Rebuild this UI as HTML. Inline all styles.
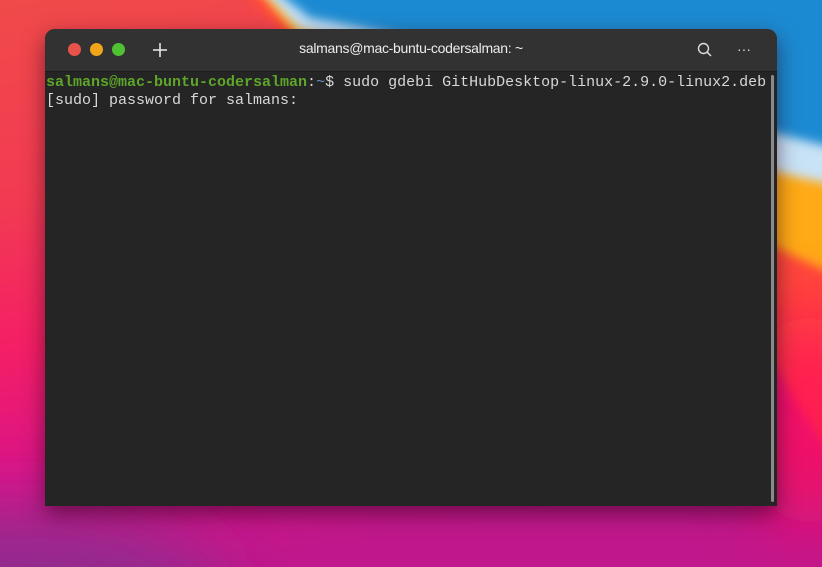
<!DOCTYPE html>
<html><head><style>
html,body{margin:0;padding:0;width:822px;height:567px;overflow:hidden;}
body{position:relative;background:#e8254a;}
.bg{position:absolute;left:0;top:0;}
.win{position:absolute;left:45px;top:29px;width:732px;height:477px;background:#252525;border-radius:10px 10px 0 0;box-shadow:0 8px 22px rgba(40,0,20,.55);overflow:hidden;}
.tb{position:absolute;left:0;top:0;width:732px;height:42px;background:#323232;border-bottom:1px solid #1c1c1c;}
.dot{position:absolute;top:14px;width:13px;height:13px;border-radius:50%;}
.title{position:absolute;left:0;width:732px;top:11px;text-align:center;color:#ececec;font:14px "Liberation Sans",sans-serif;letter-spacing:-0.3px;}
.term{position:absolute;left:1px;top:45px;font:15px/18px "Liberation Mono",monospace;color:#d8d8d8;white-space:pre;}
.g{color:#5ea62a;font-weight:bold;}
.b{color:#6c8fc4;}
.sb{position:absolute;left:726px;top:46px;width:3px;height:427px;background:#8a8a8a;border-radius:2px;}
</style></head><body>
<svg class="bg" width="822" height="567" viewBox="0 0 822 567">
<defs>
<linearGradient id="l" x1="0" y1="0" x2="0.2" y2="1">
<stop offset="0" stop-color="#f04a4a"/><stop offset="0.35" stop-color="#f23a52"/><stop offset="0.6" stop-color="#f41e66"/><stop offset="0.82" stop-color="#d8148a"/><stop offset="1" stop-color="#c0188c"/></linearGradient>
<filter id="f" x="-20%" y="-20%" width="140%" height="140%"><feGaussianBlur stdDeviation="5"/></filter>
<filter id="f2" x="-50%" y="-50%" width="200%" height="200%"><feGaussianBlur stdDeviation="35"/></filter>
</defs>
<rect width="822" height="567" fill="url(#l)"/>
<path d="M240 -20 L900 -20 L900 540 C790 420 760 320 700 260 C600 160 450 90 330 60 C290 40 260 20 240 -20Z" fill="#ff4a3a" filter="url(#f)"/>
<path d="M250 -20 L900 -20 L900 300 C780 260 700 200 600 160 C480 110 380 70 300 40Z" fill="#ffaa12" filter="url(#f)"/>
<path d="M252 -20 L900 -20 L900 195 C780 180 700 150 600 120 C480 80 380 50 300 30Z" fill="#c8e2f6" filter="url(#f)"/>
<path d="M262 -20 L900 -20 L900 160 C780 140 700 110 600 85 C480 55 380 30 310 18Z" fill="#1a8ad2" filter="url(#f)"/>
<ellipse cx="20" cy="600" rx="200" ry="90" fill="#8a2f8e" filter="url(#f2)" opacity="0.85"/>
<ellipse cx="810" cy="420" rx="60" ry="110" fill="#ff0a5a" filter="url(#f2)" opacity="0.8"/>
</svg>
<div class="win">
<div class="tb">
<div class="dot" style="left:23px;background:#e9524a"></div>
<div class="dot" style="left:45px;background:#f2a51b"></div>
<div class="dot" style="left:67px;background:#4fc133"></div>
<svg style="position:absolute;left:108px;top:14px" width="14" height="14"><path d="M7 0V14M0 7H14" stroke="#eee" stroke-width="1.5"/></svg>
<div class="title">salmans@mac-buntu-codersalman: ~</div>
<svg style="position:absolute;left:652px;top:13px" width="16" height="16"><circle cx="6.5" cy="6.5" r="5" fill="none" stroke="#ddd" stroke-width="1.4"/><path d="M10.2 10.2L14 14" stroke="#ddd" stroke-width="1.5"/></svg>
<div style="position:absolute;left:692px;top:12px;color:#ddd;font:14px 'Liberation Sans',sans-serif">···</div>
</div>
<div class="term"><span class="g">salmans@mac-buntu-codersalman</span>:<span class="b">~</span>$ sudo gdebi GitHubDesktop-linux-2.9.0-linux2.deb
[sudo] password for salmans:</div>
<div class="sb"></div>
</div>
</body></html>
